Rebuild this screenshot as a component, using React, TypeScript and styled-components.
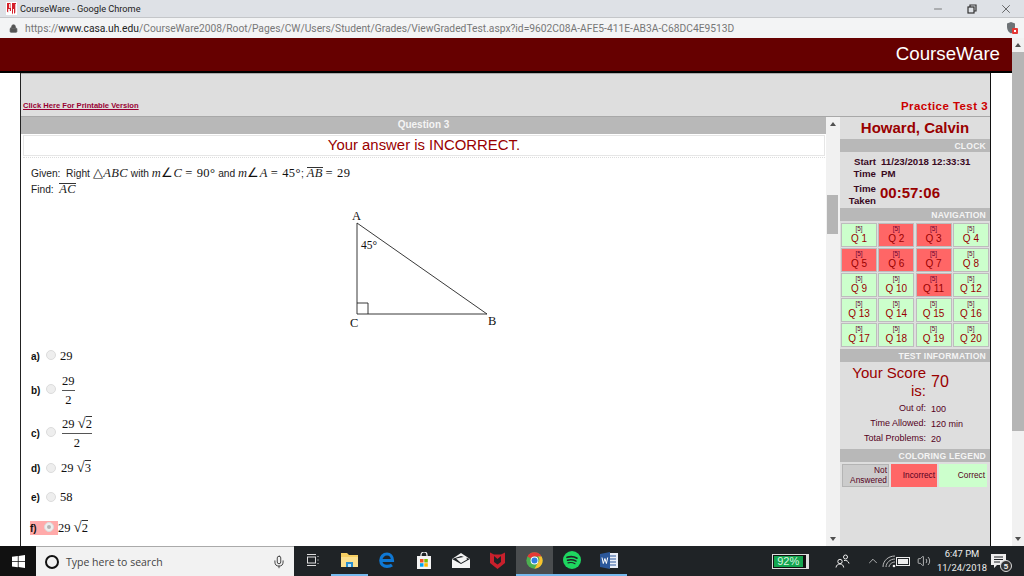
import React from 'react';
import styled, { createGlobalStyle } from 'styled-components';
import { Mic, ChevronUp, Volume2, X, Minus, Lock } from 'lucide-react';

const GlobalStyle = createGlobalStyle`
    html, body {
        margin: 0;
        padding: 0;
        width: 1024px;
        height: 576px;
        overflow: hidden;
        background: #fff;
        font-family: 'Liberation Sans', Arial, sans-serif;
    }
    * { box-sizing: border-box; }
`;

const Screen = styled.div`
    display: flex;
    flex-direction: column;
    width: 1024px;
    height: 576px;
    overflow: hidden;
`;

const TitleBar = styled.div`
    display: flex;
    align-items: center;
    height: 17px;
    padding: 0 1px 0 6px;
    background: #dee1e6;
    font-family: 'Roboto', sans-serif;
    font-size: 9.2px;
    color: #222;
`;

const TitleText = styled.span`
    margin-left: 3px;
    flex: 1;
`;

const WindowButton = styled.span`
    display: flex;
    width: 34px;
    justify-content: center;
    align-items: center;
    color: #333;
`;

const UrlBar = styled.div`
    display: flex;
    align-items: center;
    height: 21px;
    padding: 0 6px 0 9px;
    background: #f3f4f5;
    border-top: 1px solid #c4c6c9;
    font-family: 'Roboto', sans-serif;
    font-size: 10.27px;
    color: #777;
`;

const UrlText = styled.span`
    margin-left: 7px;
    flex: 1;
    white-space: nowrap;
`;

const UrlHost = styled.span`
    color: #222;
`;

const Viewport = styled.div`
    display: flex;
    flex: 1;
    min-height: 0;
`;

const PageColumn = styled.div`
    display: flex;
    flex-direction: column;
    flex: 1;
    min-width: 0;
`;

const Banner = styled.div`
    display: flex;
    flex: none;
    height: 35px;
    padding: 0 12px 2px 0;
    background: #660000;
    border-bottom: 2px solid #000;
    justify-content: flex-end;
    align-items: center;
    color: #fff;
    font-size: 18.7px;
`;

const PageBody = styled.div`
    display: flex;
    flex: 1;
    min-height: 0;
    padding: 0 21px 0 20px;
    background: #fff;
`;

const Frame = styled.div`
    display: flex;
    flex-direction: column;
    flex: 1;
    min-width: 0;
    background: #dedede;
    border-left: 1px solid #222;
    border-right: 1px solid #111;
`;

const TopPanel = styled.div`
    display: flex;
    flex: none;
    height: 44px;
    padding: 0 2px 4px 2px;
    border-top: 1px solid #aaa;
    border-bottom: 1px solid #a8a8a8;
    justify-content: space-between;
    align-items: flex-end;
`;

const PrintLink = styled.a`
    margin-bottom: 2px;
    color: #990033;
    font-size: 7.6px;
    font-weight: bold;
    text-decoration: underline;
`;

const TestName = styled.div`
    color: #cc0000;
    font-size: 11.5px;
    font-weight: bold;
    letter-spacing: 0.45px;
`;

const Columns = styled.div`
    display: flex;
    flex: 1;
    min-height: 0;
`;

const QuestionPane = styled.div`
    display: flex;
    flex-direction: column;
    width: 805px;
    background: #fff;
`;

const BandTitle = styled.div`
    display: flex;
    flex: none;
    height: 17px;
    padding-bottom: 2px;
    background: #b8b8b8;
    justify-content: center;
    align-items: center;
    color: #f4f4f4;
    font-size: 10px;
    font-weight: bold;
`;

const ResultBox = styled.div`
    display: flex;
    flex: none;
    height: 21px;
    margin: 1px 1px 0 2px;
    padding-bottom: 1px;
    border: 1px solid #e6e6e6;
    justify-content: center;
    align-items: center;
    color: #990000;
    font-size: 14.9px;
`;

const DottedRule = styled.div`
    flex: none;
    margin: 1px 1px 0 2px;
    border-top: 1px dotted #ddd;
`;

const Problem = styled.div`
    padding: 8px 0 0 10px;
    color: #222;
    font-size: 10.2px;
    line-height: 16px;
`;

const MathSpan = styled.span`
    font-family: 'Liberation Serif', serif;
    font-size: 12.5px;
    line-height: 1;
    letter-spacing: 0.4px;
    word-spacing: 0.5px;
    color: #111;
`;

const MathVar = styled.i`
    font-family: 'Liberation Serif', serif;
    font-size: 12.5px;
    line-height: 1;
    letter-spacing: 0.4px;
`;

const OverBar = styled.span`
    border-top: 1px solid #333;
`;

const FigureRow = styled.div`
    display: flex;
    height: 137px;
    margin-top: 7px;
    padding-left: 326px;
`;

const Answers = styled.div`
    display: flex;
    flex-direction: column;
    margin-top: 2px;
    padding-left: 10px;
`;

const AnswerRow = styled.div<{ $height: number }>`
    display: flex;
    height: ${(p) => p.$height}px;
    align-items: center;
    color: #111;
`;

const AnswerKey = styled.span<{ $picked?: boolean }>`
    display: flex;
    height: 14px;
    margin-left: ${(p) => (p.$picked ? '-1px' : '0')};
    padding-right: ${(p) => (p.$picked ? '4px' : '0')};
    align-items: center;
    background: ${(p) => (p.$picked ? '#ffaaaa' : 'transparent')};
    font-size: 10px;
    font-weight: bold;
`;

const KeyLetter = styled.span<{ $picked?: boolean }>`
    width: ${(p) => (p.$picked ? '14px' : '15px')};
`;

const Radio = styled.span<{ $checked?: boolean }>`
    display: flex;
    width: 10px;
    height: 10px;
    margin-bottom: 2px;
    border: 1px solid #dcdcdc;
    border-radius: 50%;
    background: #eeeeee;
    justify-content: center;
    align-items: center;

    &::after {
        content: '';
        display: ${(p) => (p.$checked ? 'block' : 'none')};
        width: 4px;
        height: 4px;
        border-radius: 50%;
        background: #b4b4b4;
    }
`;

const AnswerMath = styled.span<{ $offset?: number }>`
    display: inline-flex;
    margin-left: ${(p) => p.$offset ?? 4}px;
    align-items: center;
    font-family: 'Liberation Serif', serif;
    font-size: 12.5px;
    color: #111;
`;

const Fraction = styled.span`
    display: inline-flex;
    flex-direction: column;
    align-items: center;
`;

const Numerator = styled.span`
    padding: 0 0 2px;
    border-bottom: 1px solid #555;
    line-height: 13px;
    white-space: nowrap;
`;

const Denominator = styled.span`
    padding-top: 3px;
    line-height: 12px;
`;

const Root = styled.span`
    margin-left: 3px;
    white-space: nowrap;
`;

const RootSign = styled.span`
    font-size: 15px;
    line-height: 10px;
`;

const Radicand = styled.span`
    border-top: 1px solid #333;
`;

const ScrollTrack = styled.div`
    display: flex;
    flex-direction: column;
    flex: none;
    width: 14px;
    padding: 0 2px 0 1px;
    background: #f1f1f1;
`;

const ArrowUp = styled.span`
    flex: none;
    width: 0;
    height: 0;
    margin: 5px auto 0;
    border-left: 3px solid transparent;
    border-right: 3px solid transparent;
    border-bottom: 4px solid #505050;
`;

const ArrowDown = styled.span`
    flex: none;
    width: 0;
    height: 0;
    margin: auto auto 5px;
    border-left: 3px solid transparent;
    border-right: 3px solid transparent;
    border-top: 4px solid #505050;
`;

const Thumb = styled.div<{ $top: number; $height: number }>`
    flex: none;
    height: ${(p) => p.$height}px;
    margin-top: ${(p) => p.$top}px;
    background: #b5b5b5;
`;

const Sidebar = styled.div`
    display: flex;
    flex-direction: column;
    flex: 1;
    min-width: 0;
`;

const StudentName = styled.div`
    display: flex;
    flex: none;
    height: 22px;
    padding-bottom: 2px;
    justify-content: center;
    align-items: center;
    color: #990000;
    font-size: 15px;
    font-weight: bold;
`;

const SideBand = styled.div`
    display: flex;
    flex: none;
    height: 13px;
    padding-right: 4px;
    background: #b8b8b8;
    justify-content: flex-end;
    align-items: center;
    color: #f4f4f4;
    font-size: 8.6px;
    font-weight: bold;
    letter-spacing: 0.2px;
`;

const ClockGrid = styled.div`
    display: grid;
    flex: none;
    height: 56px;
    padding-top: 2px;
    grid-template-columns: 36px 1fr;
    column-gap: 5px;
    align-items: center;
    color: #3a0a1e;
    font-size: 9.7px;
    font-weight: bold;
    line-height: 12px;
`;

const ClockLabel = styled.div`
    text-align: right;
`;

const ClockValue = styled.div`
    white-space: pre-line;
`;

const Elapsed = styled.div`
    margin: 0 0 3px -1px;
    color: #990000;
    font-size: 15px;
    font-weight: bold;
`;

const NavGrid = styled.div`
    display: grid;
    flex: none;
    padding: 2px 2px 2px 1px;
    grid-template-columns: 36px 36px 36px 36px;
    grid-auto-rows: 24px;
    gap: 1px 1.3px;
`;

const NavCell = styled.div<{ $wrong?: boolean }>`
    display: flex;
    flex-direction: column;
    border: 1px solid #bdbdbd;
    background: ${(p) => (p.$wrong ? '#ff6666' : '#ccffcc')};
    align-items: center;
    color: #990000;
    line-height: 1;
`;

const NavPoints = styled.span`
    margin-top: 2px;
    color: #660033;
    font-size: 6.4px;
`;

const NavLabel = styled.span`
    margin-top: 2px;
    font-size: 10px;
`;

const ScoreGrid = styled.div`
    display: grid;
    flex: none;
    height: 87px;
    padding-top: 1px;
    grid-template-columns: 86px 1fr;
    grid-template-rows: 38px 15px 15px 15px;
    column-gap: 5px;
    align-items: center;
    color: #550022;
    font-size: 9px;
`;

const ScoreLabel = styled.div<{ $large?: boolean }>`
    color: ${(p) => (p.$large ? '#990000' : '#550022')};
    font-size: ${(p) => (p.$large ? '15px' : '9px')};
    line-height: ${(p) => (p.$large ? '18px' : '15px')};
    text-align: right;
    white-space: ${(p) => (p.$large ? 'normal' : 'nowrap')};
`;

const ScoreValue = styled.div<{ $large?: boolean }>`
    color: ${(p) => (p.$large ? '#990000' : '#550022')};
    font-size: ${(p) => (p.$large ? '16px' : '9px')};
`;

const LegendRow = styled.div`
    display: flex;
    flex: none;
    height: 25px;
    margin-top: 1px;
    padding: 1px 2px;
    gap: 2px;
    color: #550022;
    font-size: 8.3px;
`;

const LegendCell = styled.div<{ $bg: string; $border?: string; $width: number }>`
    display: flex;
    width: ${(p) => p.$width}px;
    height: 23px;
    padding-right: 1px;
    background: ${(p) => p.$bg};
    border: 1px solid ${(p) => p.$border ?? p.$bg};
    justify-content: flex-end;
    align-items: center;
    line-height: 9.5px;
    text-align: right;
`;

const PageScroll = styled.div`
    display: flex;
    flex-direction: column;
    flex: none;
    width: 12px;
    background: #f1f1f1;
`;

const Taskbar = styled.div`
    display: flex;
    flex: none;
    height: 30px;
    background: #1f2326;
    align-items: stretch;
`;

const StartButton = styled.div`
    display: flex;
    width: 36px;
    background: #111;
    justify-content: center;
    align-items: center;
`;

const SearchBox = styled.div`
    display: flex;
    width: 258px;
    padding: 0 8px 0 9px;
    background: #f2f2f2;
    border-top: 1px solid #aaa;
    align-items: center;
    color: #444;
    font-family: 'Open Sans', sans-serif;
    font-size: 10.5px;
`;

const SearchCircle = styled.span`
    flex: none;
    width: 14px;
    height: 14px;
    border: 2px solid #111;
    border-radius: 50%;
`;

const SearchText = styled.span`
    flex: 1;
    margin-left: 7px;
`;

const TaskSlot = styled.div<{ $open?: boolean; $active?: boolean }>`
    display: flex;
    width: 37px;
    background: ${(p) => (p.$active ? '#4a4d4f' : 'transparent')};
    border-bottom: 2px solid ${(p) => (p.$open ? '#76b9ed' : 'transparent')};
    justify-content: center;
    align-items: center;
`;

const TrayArea = styled.div`
    display: flex;
    flex: 1;
    padding-right: 18px;
    justify-content: flex-end;
    align-items: center;
    color: #eee;
`;

const BatteryMeter = styled.div`
    display: flex;
    width: 37px;
    height: 15px;
    margin-right: 26px;
    padding: 1px;
    background: #111;
    border: 1px solid #ddd;
    border-right: 3px solid #ddd;
    color: #d8f5e0;
    font-size: 11px;
`;

const BatteryFill = styled.div`
    display: flex;
    width: 92%;
    background: #14a54f;
    justify-content: center;
    align-items: center;
`;

const TrayIcon = styled.span<{ $gap: number }>`
    display: flex;
    margin-right: ${(p) => p.$gap}px;
    align-items: center;
`;

const Clock = styled.div`
    display: flex;
    flex-direction: column;
    width: 50px;
    margin: 0 4px 0 6px;
    align-items: center;
    font-family: 'Roboto', sans-serif;
    font-size: 9.4px;
    line-height: 14px;
    white-space: nowrap;
`;

const Notify = styled.div`
    position: relative;
    display: flex;
    align-items: center;
`;

const NotifyBadge = styled.span`
    position: absolute;
    right: -6px;
    bottom: -4px;
    display: flex;
    width: 12px;
    height: 12px;
    border: 1px solid #ddd;
    border-radius: 50%;
    background: #333;
    justify-content: center;
    align-items: center;
    font-size: 8px;
    font-weight: bold;
`;

const wrongQuestions = [2, 3, 5, 6, 7, 11];

const UhLogo = () => (
    <svg width="11" height="13" viewBox="0 0 11 13">
        <rect width="11" height="13" fill="#fff" />
        <path d="M1 1h3v1H3.2v4h1.3V1H5v8H3.8V7H2.2v3.5L1 9.5V2H1zM6 1h4v1H9.3v8.5L8 12V7H7v5.5L6 11V2z" fill="#d4202a" />
    </svg>
);

const RestoreIcon = () => (
    <svg width="10" height="10" viewBox="0 0 10 10" fill="none" stroke="#333" strokeWidth="1.2">
        <rect x="1" y="3" width="6" height="6" />
        <path d="M3 3V1h6v6H7" />
    </svg>
);

const ShieldIcon = () => (
    <svg width="12" height="14" viewBox="0 0 12 14">
        <path d="M5 1l4 1.4V6c0 3.4-2 5.5-4 6.5C3 11.500 1 9.400 1 6V2.400z" fill="#6d7275" />
        <rect x="6" y="7" width="6" height="6" rx="1" fill="#e53935" />
        <rect x="8" y="9" width="2" height="2" fill="#fff" />
    </svg>
);

const Triangle = () => (
    <svg width="155" height="130" viewBox="0 0 155 130">
        <g fill="none" stroke="#222" strokeWidth="0.9">
            <path d="M10 18V109H140Z" />
            <path d="M10 98H21V109" />
        </g>
        <g fontFamily="'Liberation Serif', serif" fontSize="12.5" fill="#111">
            <text x="5" y="15">A</text>
            <text x="14" y="44" fontSize="11.5">45°</text>
            <text x="3" y="122">C</text>
            <text x="141" y="120">B</text>
        </g>
    </svg>
);

const WindowsIcon = () => (
    <svg width="13" height="13" viewBox="0 0 13 13" fill="#fff">
        <path d="M0 1.800L5.800 1v5.200H0zM6.600.9L13 0v6.200H6.600zM0 7h5.800v5.200L0 11.400zM6.600 7H13v6l-6.400-.9z" />
    </svg>
);

const TaskViewIcon = () => (
    <svg width="13" height="14" viewBox="0 0 13 14" fill="none" stroke="#ddd" strokeWidth="1">
        <rect x="1.500" y="4" width="8" height="6" />
        <path d="M1 1.500h9M1 12.500h9M12 3v1M12 6.500v1M12 10v1" />
    </svg>
);

const ExplorerIcon = () => (
    <svg width="17" height="16" viewBox="0 0 17 16">
        <path d="M0 1h6l2 2h9v12H0z" fill="#f6cf62" />
        <rect y="5" width="17" height="10" fill="#fbe08e" />
        <rect x="5" y="10" width="7" height="5" fill="#2a8fd0" />
        <rect x="7" y="12" width="3" height="3" fill="#bfe3f7" />
    </svg>
);

const EdgeIcon = () => (
    <svg width="16" height="16" viewBox="0 0 16 16" fill="none" stroke="#0f78d4" strokeWidth="3.200">
        <path d="M2 8.500h11.500C13.500 4.500 11 2 8 2 4.500 2 1.800 5 1.800 8.500 1.800 12 4.500 14.400 8 14.400c2 0 3.800-.5 5-1.400" />
    </svg>
);

const StoreIcon = () => (
    <svg width="16" height="17" viewBox="0 0 16 17">
        <path d="M1 4h14v13H1z" fill="#f4f4f4" />
        <path d="M5 5V3a3 3 0 016 0v2" fill="none" stroke="#f4f4f4" strokeWidth="1.200" />
        <rect x="4" y="7" width="3.500" height="3.500" fill="#f25022" />
        <rect x="8.300" y="7" width="3.500" height="3.500" fill="#7fba00" />
        <rect x="4" y="11.200" width="3.500" height="3.500" fill="#00a4ef" />
        <rect x="8.300" y="11.200" width="3.500" height="3.500" fill="#ffb900" />
    </svg>
);

const MailIcon = () => (
    <svg width="18" height="15" viewBox="0 0 18 15">
        <path d="M0 6l9-6 9 6v9H0z" fill="#f4f4f4" />
        <path d="M0 6l9 5 9-5-9-3z" fill="#1f2326" />
        <path d="M4 5.500L14 3.500l1 3-6 3.500z" fill="#f4f4f4" />
    </svg>
);

const McAfeeIcon = () => (
    <svg width="15" height="18" viewBox="0 0 15 18">
        <path d="M0 1.500L4 3.500h7l4-2V12l-7.500 6L0 12z" fill="#c8202c" />
        <path d="M4 5l3.500 3L11 5v6l-3.500 2.500L4 11z" fill="#1f2326" />
    </svg>
);

const ChromeIcon = () => (
    <svg width="17" height="17" viewBox="0 0 48 48">
        <circle cx="24" cy="24" r="23" fill="#4caf50" />
        <path d="M24 1a23 23 0 0119.900 11.500H24a11.500 11.500 0 00-10 5.800L4 12.500A23 23 0 0124 1z" fill="#e53935" />
        <path d="M43.900 12.500A23 23 0 0124 47l10-17.200a11.500 11.500 0 000-17.300z" fill="#fbc02d" />
        <circle cx="24" cy="24" r="11" fill="#fff" />
        <circle cx="24" cy="24" r="8.500" fill="#2f7de1" />
    </svg>
);

const SpotifyIcon = () => (
    <svg width="18" height="18" viewBox="0 0 18 18">
        <circle cx="9" cy="9" r="9" fill="#1ed760" />
        <g fill="none" stroke="#1f2326" strokeLinecap="round">
            <path d="M4 6.300c3.400-1 7.200-.7 10 .9" strokeWidth="1.700" />
            <path d="M4.500 9.200c3-.8 6-.5 8.600.9" strokeWidth="1.400" />
            <path d="M5 11.900c2.500-.6 5-.4 7 .8" strokeWidth="1.100" />
        </g>
    </svg>
);

const WordIcon = () => (
    <svg width="18" height="17" viewBox="0 0 18 17">
        <rect x="6" y="1" width="12" height="15" fill="#e9eef7" />
        <path d="M9 4h7M9 7h7M9 10h7M9 13h7" stroke="#2b579a" />
        <path d="M0 2l10-2v17L0 15z" fill="#2b579a" />
        <path d="M2 5.500l1.300 6 1.600-5 1.500 5 1.300-6" fill="none" stroke="#fff" />
    </svg>
);

const PeopleIcon = () => (
    <svg width="15" height="14" viewBox="0 0 15 14" fill="none" stroke="#eee" strokeWidth="1">
        <circle cx="5" cy="7.500" r="2.200" />
        <path d="M1 13.500c.3-2.300 2-3.500 4-3.500s3.400 1.200 3.700 3.500" />
        <circle cx="10.500" cy="3" r="2" />
        <path d="M9 6.500c2.500-.5 4.500.7 5 3" />
    </svg>
);

const WifiIcon = () => (
    <svg width="14" height="13" viewBox="0 0 14 13" fill="none" stroke="#bbb" strokeWidth="1">
        <path d="M1 12C1 6 6 1 13 1M4 12c0-4 4-8 9-8M7 12c0-2.500 3-5 6-5" />
        <circle cx="12" cy="11" r="1.300" fill="#eee" stroke="none" />
    </svg>
);

const TrayBatteryIcon = () => (
    <svg width="15" height="9" viewBox="0 0 15 9" fill="none" stroke="#eee" strokeWidth="1">
        <rect x="0.500" y="0.500" width="13" height="8" />
        <rect x="2" y="2" width="10" height="5" fill="#eee" stroke="none" />
    </svg>
);

const NotifyIcon = () => (
    <svg width="15" height="14" viewBox="0 0 15 14" fill="#eee">
        <path d="M0 0h15v11H6l-3 3v-3H0z" />
        <path d="M3 3h9M3 5.500h9M3 8h6" stroke="#1f2326" />
    </svg>
);

const SquareRoot: React.FC<{ value: string }> = ({ value }) => (
    <Root>
        <RootSign>√</RootSign>
        <Radicand>{value}</Radicand>
    </Root>
);

const App: React.FC = () => {
    return (
        <Screen>
            <GlobalStyle />
            <TitleBar>
                <UhLogo />
                <TitleText>CourseWare - Google Chrome</TitleText>
                <WindowButton>
                    <Minus size={12} strokeWidth={1.2} />
                </WindowButton>
                <WindowButton>
                    <RestoreIcon />
                </WindowButton>
                <WindowButton>
                    <X size={14} strokeWidth={1.2} />
                </WindowButton>
            </TitleBar>
            <UrlBar>
                <Lock size={9} fill="#555" color="#555" />
                <UrlText>
                    https://<UrlHost>www.casa.uh.edu</UrlHost>
                    /CourseWare2008/Root/Pages/CW/Users/Student/Grades/ViewGradedTest.aspx?id=9602C08A-AFE5-411E-AB3A-C68DC4E9513D
                </UrlText>
                <ShieldIcon />
            </UrlBar>
            <Viewport>
                <PageColumn>
                    <Banner>CourseWare</Banner>
                    <PageBody>
                        <Frame>
                            <TopPanel>
                                <PrintLink>Click Here For Printable Version</PrintLink>
                                <TestName>Practice Test 3</TestName>
                            </TopPanel>
                            <Columns>
                                <QuestionPane>
                                    <BandTitle>Question 3</BandTitle>
                                    <ResultBox>Your answer is INCORRECT.</ResultBox>
                                    <DottedRule />
                                    <Problem>
                                        <div>
                                            Given:&nbsp; Right <MathSpan>△</MathSpan>
                                            <MathVar>ABC</MathVar> with <MathVar>m</MathVar>
                                            <MathSpan>∠</MathSpan>
                                            <MathVar>C</MathVar> <MathSpan>= 90°</MathSpan> and{' '}
                                            <MathVar>m</MathVar>
                                            <MathSpan>∠</MathSpan>
                                            <MathVar>A</MathVar> <MathSpan>= 45°</MathSpan>;{' '}
                                            <OverBar>
                                                <MathVar>AB</MathVar>
                                            </OverBar>{' '}
                                            <MathSpan>= 29</MathSpan>
                                        </div>
                                        <div>
                                            Find:&nbsp;{' '}
                                            <OverBar>
                                                <MathVar>AC</MathVar>
                                            </OverBar>
                                        </div>
                                    </Problem>
                                    <FigureRow>
                                        <Triangle />
                                    </FigureRow>
                                    <Answers>
                                        <AnswerRow $height={24}>
                                            <AnswerKey>
                                                <KeyLetter>a)</KeyLetter>
                                                <Radio />
                                            </AnswerKey>
                                            <AnswerMath>29</AnswerMath>
                                        </AnswerRow>
                                        <AnswerRow $height={44}>
                                            <AnswerKey>
                                                <KeyLetter>b)</KeyLetter>
                                                <Radio />
                                            </AnswerKey>
                                            <AnswerMath $offset={6}>
                                                <Fraction>
                                                    <Numerator>29</Numerator>
                                                    <Denominator>2</Denominator>
                                                </Fraction>
                                            </AnswerMath>
                                        </AnswerRow>
                                        <AnswerRow $height={42}>
                                            <AnswerKey>
                                                <KeyLetter>c)</KeyLetter>
                                                <Radio />
                                            </AnswerKey>
                                            <AnswerMath $offset={6}>
                                                <Fraction>
                                                    <Numerator>
                                                        29
                                                        <SquareRoot value="2" />
                                                    </Numerator>
                                                    <Denominator>2</Denominator>
                                                </Fraction>
                                            </AnswerMath>
                                        </AnswerRow>
                                        <AnswerRow $height={29}>
                                            <AnswerKey>
                                                <KeyLetter>d)</KeyLetter>
                                                <Radio />
                                            </AnswerKey>
                                            <AnswerMath $offset={5}>
                                                29
                                                <SquareRoot value="3" />
                                            </AnswerMath>
                                        </AnswerRow>
                                        <AnswerRow $height={29}>
                                            <AnswerKey>
                                                <KeyLetter>e)</KeyLetter>
                                                <Radio />
                                            </AnswerKey>
                                            <AnswerMath>58</AnswerMath>
                                        </AnswerRow>
                                        <AnswerRow $height={32}>
                                            <AnswerKey $picked>
                                                <KeyLetter $picked>f)</KeyLetter>
                                                <Radio $checked />
                                            </AnswerKey>
                                            <AnswerMath $offset={0}>
                                                29
                                                <SquareRoot value="2" />
                                            </AnswerMath>
                                        </AnswerRow>
                                    </Answers>
                                </QuestionPane>
                                <ScrollTrack>
                                    <ArrowUp />
                                    <Thumb $top={69} $height={39} />
                                    <ArrowDown />
                                </ScrollTrack>
                                <Sidebar>
                                    <StudentName>Howard, Calvin</StudentName>
                                    <SideBand>CLOCK</SideBand>
                                    <ClockGrid>
                                        <ClockLabel>
                                            Start
                                            <br />
                                            Time
                                        </ClockLabel>
                                        <ClockValue>{'11/23/2018 12:33:31\nPM'}</ClockValue>
                                        <ClockLabel>
                                            Time
                                            <br />
                                            Taken
                                        </ClockLabel>
                                        <Elapsed>00:57:06</Elapsed>
                                    </ClockGrid>
                                    <SideBand>NAVIGATION</SideBand>
                                    <NavGrid>
                                        {Array.from({ length: 20 }, (_, i) => i + 1).map((q) => (
                                            <NavCell key={q} $wrong={wrongQuestions.includes(q)}>
                                                <NavPoints>[5]</NavPoints>
                                                <NavLabel>Q {q}</NavLabel>
                                            </NavCell>
                                        ))}
                                    </NavGrid>
                                    <SideBand>TEST INFORMATION</SideBand>
                                    <ScoreGrid>
                                        <ScoreLabel $large>Your Score is:</ScoreLabel>
                                        <ScoreValue $large>70</ScoreValue>
                                        <ScoreLabel>Out of:</ScoreLabel>
                                        <ScoreValue>100</ScoreValue>
                                        <ScoreLabel>Time Allowed:</ScoreLabel>
                                        <ScoreValue>120 min</ScoreValue>
                                        <ScoreLabel>Total Problems:</ScoreLabel>
                                        <ScoreValue>20</ScoreValue>
                                    </ScoreGrid>
                                    <SideBand>COLORING LEGEND</SideBand>
                                    <LegendRow>
                                        <LegendCell $bg="#cccccc" $border="#b4b4b4" $width={47}>
                                            Not
                                            <br />
                                            Answered
                                        </LegendCell>
                                        <LegendCell $bg="#ff6666" $width={46}>
                                            Incorrect
                                        </LegendCell>
                                        <LegendCell $bg="#ccffcc" $width={48}>
                                            Correct
                                        </LegendCell>
                                    </LegendRow>
                                </Sidebar>
                            </Columns>
                        </Frame>
                    </PageBody>
                </PageColumn>
                <PageScroll>
                    <ArrowUp />
                    <Thumb $top={5} $height={379} />
                    <ArrowDown />
                </PageScroll>
            </Viewport>
            <Taskbar>
                <StartButton>
                    <WindowsIcon />
                </StartButton>
                <SearchBox>
                    <SearchCircle />
                    <SearchText>Type here to search</SearchText>
                    <Mic size={14} strokeWidth={1.4} color="#222" />
                </SearchBox>
                <TaskSlot>
                    <TaskViewIcon />
                </TaskSlot>
                <TaskSlot $open>
                    <ExplorerIcon />
                </TaskSlot>
                <TaskSlot>
                    <EdgeIcon />
                </TaskSlot>
                <TaskSlot>
                    <StoreIcon />
                </TaskSlot>
                <TaskSlot>
                    <MailIcon />
                </TaskSlot>
                <TaskSlot>
                    <McAfeeIcon />
                </TaskSlot>
                <TaskSlot $open $active>
                    <ChromeIcon />
                </TaskSlot>
                <TaskSlot $open>
                    <SpotifyIcon />
                </TaskSlot>
                <TaskSlot $open>
                    <WordIcon />
                </TaskSlot>
                <TrayArea>
                    <BatteryMeter>
                        <BatteryFill>92%</BatteryFill>
                    </BatteryMeter>
                    <TrayIcon $gap={16}>
                        <PeopleIcon />
                    </TrayIcon>
                    <TrayIcon $gap={2}>
                        <ChevronUp size={14} strokeWidth={1.2} />
                    </TrayIcon>
                    <TrayIcon $gap={0}>
                        <WifiIcon />
                    </TrayIcon>
                    <TrayIcon $gap={6}>
                        <TrayBatteryIcon />
                    </TrayIcon>
                    <TrayIcon $gap={0}>
                        <Volume2 size={14} strokeWidth={1.2} />
                    </TrayIcon>
                    <Clock>
                        <span>6:47 PM</span>
                        <span>11/24/2018</span>
                    </Clock>
                    <Notify>
                        <NotifyIcon />
                        <NotifyBadge>5</NotifyBadge>
                    </Notify>
                </TrayArea>
            </Taskbar>
        </Screen>
    );
};

export default App;
